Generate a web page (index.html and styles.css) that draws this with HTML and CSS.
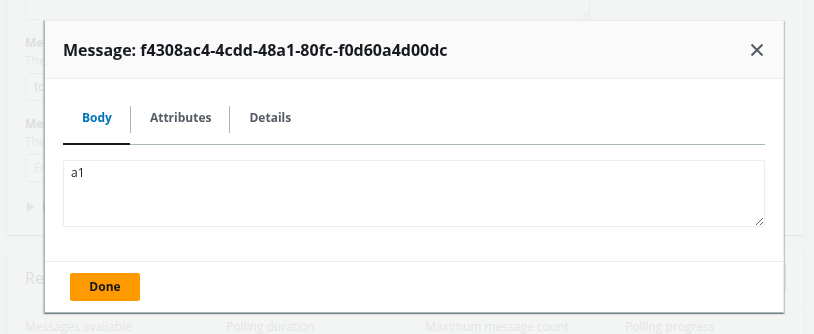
FILE: index.html
```html
<!DOCTYPE html>
<html lang="en">
<head>
<meta charset="utf-8">
<title>Message</title>
<link rel="stylesheet" href="styles.css">
</head>
<body>
<div class="page">
  <div class="card card-form">
    <textarea class="bg-textarea" readonly>a1</textarea>
    <div class="field">
      <div class="label">Message group ID</div>
      <div class="desc">The tag that specifies that a message belongs to a specific message group.</div>
      <div class="input">tc</div>
    </div>
    <div class="field">
      <div class="label">Message deduplication ID</div>
      <div class="desc">The token used for deduplication of sent messages.</div>
      <div class="input placeholder">Enter message deduplication ID</div>
    </div>
    <div class="expander"><span class="caret"></span><span>Message attributes</span></div>
  </div>
  <div class="card card-receive">
    <div class="card-header">
      <h2 class="card-title">Receive messages</h2>
      <div class="actions">
        <span class="bg-btn">Edit poll settings</span>
        <span class="bg-btn">Poll for messages</span>
      </div>
    </div>
    <div class="stats">
      <div class="stat">Messages available</div>
      <div class="stat">Polling duration</div>
      <div class="stat">Maximum message count</div>
      <div class="stat">Polling progress</div>
    </div>
  </div>
</div>
<div class="overlay"></div>
<div class="modal" role="dialog">
  <div class="modal-header">
    <h2 class="modal-title">Message: f4308ac4-4cdd-48a1-80fc-f0d60a4d00dc</h2>
    <button class="close" aria-label="Close">
      <svg width="14" height="14" viewBox="0 0 14 14"><path d="M1.5 1.5 L12.5 12.5 M12.5 1.5 L1.5 12.5" stroke="#545b64" stroke-width="2" fill="none"/></svg>
    </button>
  </div>
  <div class="modal-body">
    <div class="tabs">
      <div class="tab active">Body</div>
      <div class="tab-sep"></div>
      <div class="tab">Attributes</div>
      <div class="tab-sep"></div>
      <div class="tab">Details</div>
    </div>
    <textarea class="body-text" readonly>a1</textarea>
  </div>
  <div class="modal-footer">
    <button class="done">Done</button>
  </div>
</div>
</body>
</html>
```

FILE: styles.css
```css
* { box-sizing: border-box; }
html, body { margin: 0; padding: 0; }
body {
  background: #f2f3f3;
  font-family: "Open Sans", "Liberation Sans", sans-serif;
  color: #16191f;
  width: 814px;
  height: 334px;
  overflow: hidden;
}
.page {
  margin-top: -40px;
  padding: 0 10px 0 7px;
}
.card {
  background: #fff;
  box-shadow: 0 1px 1px 0 rgba(0,28,36,.3), 1px 1px 1px 0 rgba(0,28,36,.15), -1px 1px 1px 0 rgba(0,28,36,.15);
}
.card-form {
  padding: 0 18px 18px;
}
.bg-textarea {
  display: block;
  width: 565px;
  height: 60px;
  border: 1px solid #aab7b8;
  border-radius: 2px;
  font: 12px "Open Sans", sans-serif;
  resize: vertical;
  color: #16191f;
  background: #fff;
}
.field { margin-top: 13px; width: 565px; }
.label { font-size: 12px; line-height: 20px; font-weight: 700; }
.desc { font-size: 12px; line-height: 16px; color: #687078; }
.input {
  margin-top: 4px;
  height: 28px;
  border: 1px solid #aab7b8;
  border-radius: 2px;
  padding: 0 8px;
  font-size: 12px;
  line-height: 26px;
}
.placeholder { color: #879596; font-style: italic; }
.expander {
  margin-top: 15px;
  display: flex;
  align-items: center;
  gap: 8px;
  font-size: 12px;
  line-height: 20px;
  font-weight: 700;
  padding-left: 2px;
}
.caret {
  width: 0; height: 0;
  border-left: 7px solid #545b64;
  border-top: 5px solid transparent;
  border-bottom: 5px solid transparent;
}
.card-receive { margin-top: 14px; }
.card-header {
  display: flex;
  align-items: center;
  justify-content: space-between;
  padding: 15px 18px 16px;
  border-bottom: 1px solid #eaeded;
}
.card-title { margin: 0; font-size: 16px; line-height: 28px; font-weight: 400; }
.actions { display: flex; gap: 8px; }
.bg-btn {
  height: 28px;
  border: 1px solid #545b64;
  border-radius: 2px;
  padding: 0 20px;
  font-size: 12px;
  line-height: 26px;
  font-weight: 700;
  color: #545b64;
}
.stats { display: grid; grid-template-columns: 200px 199px 200px 198px; }
.stat {
  padding: 8px 18px;
  font-size: 12px;
  line-height: 20px;
  color: #545b64;
  border-left: 1px solid #eaeded;
  height: 60px;
}
.stat:first-child { border-left: none; }

.overlay {
  position: fixed;
  inset: 0;
  background: rgba(242,243,243,0.9);
}
.modal {
  position: fixed;
  left: 44px;
  top: 20px;
  width: 740px;
  background: #fff;
  border: 1px solid #eaeded;
  border-bottom-color: #aab7b8;
  border-left-color: #aab7b8;
  box-shadow: 0 1px 1px 0 rgba(0,28,36,.3), 1px 1px 1px 0 rgba(0,28,36,.15), -1px 1px 1px 0 rgba(0,28,36,.15);
}
.modal-header {
  display: flex;
  align-items: center;
  justify-content: space-between;
  background: #fafafa;
  border-bottom: 1px solid #eaeded;
  padding: 0 19px 0 18px;
  height: 58px;
}
.modal-title {
  margin: 0;
  font-size: 16px;
  line-height: 22px;
  font-weight: 700;
  color: #16191f;
}
.close {
  border: none;
  background: none;
  padding: 0;
  width: 14px;
  height: 14px;
  display: flex;
}
.modal-body { padding: 18px 18px 34px; }
.tabs {
  display: flex;
  align-items: flex-start;
  border-bottom: 1px solid #aab7b8;
}
.tab {
  position: relative;
  padding: 11px 18px 16px 19px;
  font-size: 12px;
  line-height: 20px;
  font-weight: 700;
  color: #545b64;
}
.tab.active { color: #0073bb; }
.tab.active::after {
  content: "";
  position: absolute;
  left: 0; right: 0; bottom: -1px;
  height: 2px;
  background: #16191f;
}
.tab-sep {
  width: 1px;
  height: 27px;
  margin-top: 9px;
  background: #aab7b8;
}
.body-text {
  display: block;
  margin-top: 15px;
  width: 100%;
  height: 67px;
  border: 1px solid #eaeded;
  border-radius: 2px;
  padding: 3px 7px;
  font: 12px/18px "Open Sans", sans-serif;
  color: #16191f;
  resize: vertical;
  outline: none;
}
.modal-footer {
  border-top: 1px solid #eaeded;
  padding: 11px 25px 11px;
}
.done {
  display: block;
  width: 70px;
  height: 28px;
  background: #ff9900;
  border: 1px solid #ff9900;
  border-radius: 2px;
  font: 700 12px/20px "Open Sans", sans-serif;
  color: #16191f;
  padding: 0;
}
```
